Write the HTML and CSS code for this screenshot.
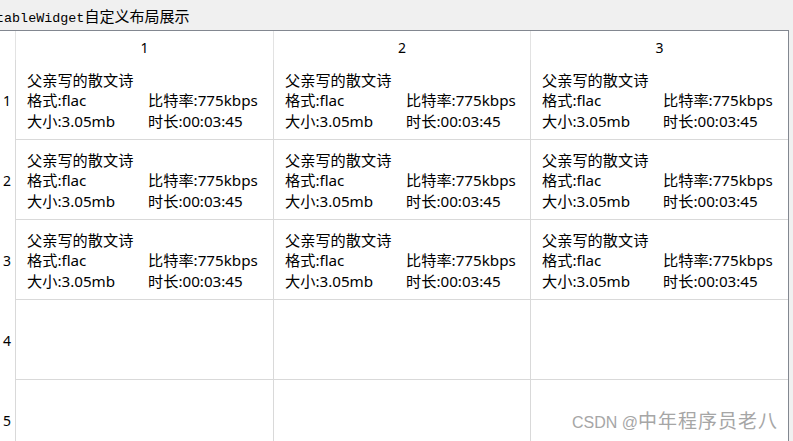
FILE: index.html
```html
<!DOCTYPE html>
<html lang="zh-CN">
<head>
    <meta charset="UTF-8">
    <meta name="viewport" content="width=device-width, initial-scale=1.0">
    <title>tableWidget自定义布局展示</title>
    <link rel="stylesheet" href="styles.css">
</head>
<body>
    <div class="title-bar"><span class="mono">tableWidget</span>自定义布局展示</div>

    <div class="frame">
        <div class="table">
            <!-- header row -->
            <div class="corner"></div>
            <div class="hhead">1</div>
            <div class="hhead">2</div>
            <div class="hhead">3</div>

            <!-- row 1 -->
            <div class="vhead">1</div>
            <div class="cell">
                <div class="song">
                    <div class="name">父亲写的散文诗</div>
                    <div>格式:flac</div><div>比特率:775kbps</div>
                    <div>大小:3.05mb</div><div>时长:00:03:45</div>
                </div>
            </div>
            <div class="cell">
                <div class="song">
                    <div class="name">父亲写的散文诗</div>
                    <div>格式:flac</div><div>比特率:775kbps</div>
                    <div>大小:3.05mb</div><div>时长:00:03:45</div>
                </div>
            </div>
            <div class="cell">
                <div class="song">
                    <div class="name">父亲写的散文诗</div>
                    <div>格式:flac</div><div>比特率:775kbps</div>
                    <div>大小:3.05mb</div><div>时长:00:03:45</div>
                </div>
            </div>

            <!-- row 2 -->
            <div class="vhead">2</div>
            <div class="cell">
                <div class="song">
                    <div class="name">父亲写的散文诗</div>
                    <div>格式:flac</div><div>比特率:775kbps</div>
                    <div>大小:3.05mb</div><div>时长:00:03:45</div>
                </div>
            </div>
            <div class="cell">
                <div class="song">
                    <div class="name">父亲写的散文诗</div>
                    <div>格式:flac</div><div>比特率:775kbps</div>
                    <div>大小:3.05mb</div><div>时长:00:03:45</div>
                </div>
            </div>
            <div class="cell">
                <div class="song">
                    <div class="name">父亲写的散文诗</div>
                    <div>格式:flac</div><div>比特率:775kbps</div>
                    <div>大小:3.05mb</div><div>时长:00:03:45</div>
                </div>
            </div>

            <!-- row 3 -->
            <div class="vhead">3</div>
            <div class="cell">
                <div class="song">
                    <div class="name">父亲写的散文诗</div>
                    <div>格式:flac</div><div>比特率:775kbps</div>
                    <div>大小:3.05mb</div><div>时长:00:03:45</div>
                </div>
            </div>
            <div class="cell">
                <div class="song">
                    <div class="name">父亲写的散文诗</div>
                    <div>格式:flac</div><div>比特率:775kbps</div>
                    <div>大小:3.05mb</div><div>时长:00:03:45</div>
                </div>
            </div>
            <div class="cell">
                <div class="song">
                    <div class="name">父亲写的散文诗</div>
                    <div>格式:flac</div><div>比特率:775kbps</div>
                    <div>大小:3.05mb</div><div>时长:00:03:45</div>
                </div>
            </div>

            <!-- empty rows -->
            <div class="vhead">4</div>
            <div class="cell"></div>
            <div class="cell"></div>
            <div class="cell"></div>

            <div class="vhead">5</div>
            <div class="cell"></div>
            <div class="cell"></div>
            <div class="cell"></div>
        </div>

        <div class="watermark">CSDN @<span class="wide">中年程序员老八</span></div>
    </div>
</body>
</html>
```

FILE: styles.css
```css
body {
    margin: 0;
    padding: 0;
    background: #f0f0f0;
    color: #000;
    font-family: "Noto Sans", "Noto Sans CJK SC", sans-serif;
    overflow: hidden;
}

.title-bar {
    height: 30px;
    line-height: 32px;
    margin-left: -4px;
    font-size: 15px;
    font-family: "Noto Sans CJK SC", sans-serif;
    white-space: nowrap;
}

.title-bar .mono {
    font-family: "Liberation Mono", "DejaVu Sans Mono", monospace;
    font-size: 13.4px;
}

.frame {
    position: relative;
    width: 788px;
    height: 410px;
    background: #fff;
    border-top: 1px solid #828790;
    border-right: 1px solid #828790;
    overflow: hidden;
}

.table {
    display: grid;
    grid-template-columns: 15px 258px 257px 258px;
    grid-template-rows: 29px repeat(5, 80px);
}

.hhead {
    border-left: 1px solid #e3e3e3;
    display: flex;
    align-items: center;
    justify-content: center;
    font-size: 14px;
    padding-top: 3px;
}

.vhead {
    display: flex;
    align-items: center;
    justify-content: center;
    font-size: 14px;
    padding-top: 1px;
    padding-right: 1px;
}

.cell {
    border-left: 1px solid #d9d9d9;
    border-bottom: 1px solid #d9d9d9;
    display: flex;
    align-items: center;
    padding-left: 11px;
    padding-top: 2px;
}

.song {
    display: grid;
    grid-template-columns: 121px auto;
    font-size: 15.2px;
    line-height: 20.5px;
    white-space: nowrap;
}

.song .name {
    grid-column: 1 / span 2;
}

.watermark {
    position: absolute;
    right: 10px;
    bottom: 8px;
    font-size: 16px;
    color: #a6a6a6;
    font-family: "Liberation Sans", "Noto Sans CJK SC", sans-serif;
    white-space: nowrap;
}

.watermark .wide {
    font-size: 19px;
    letter-spacing: 1px;
}
```
